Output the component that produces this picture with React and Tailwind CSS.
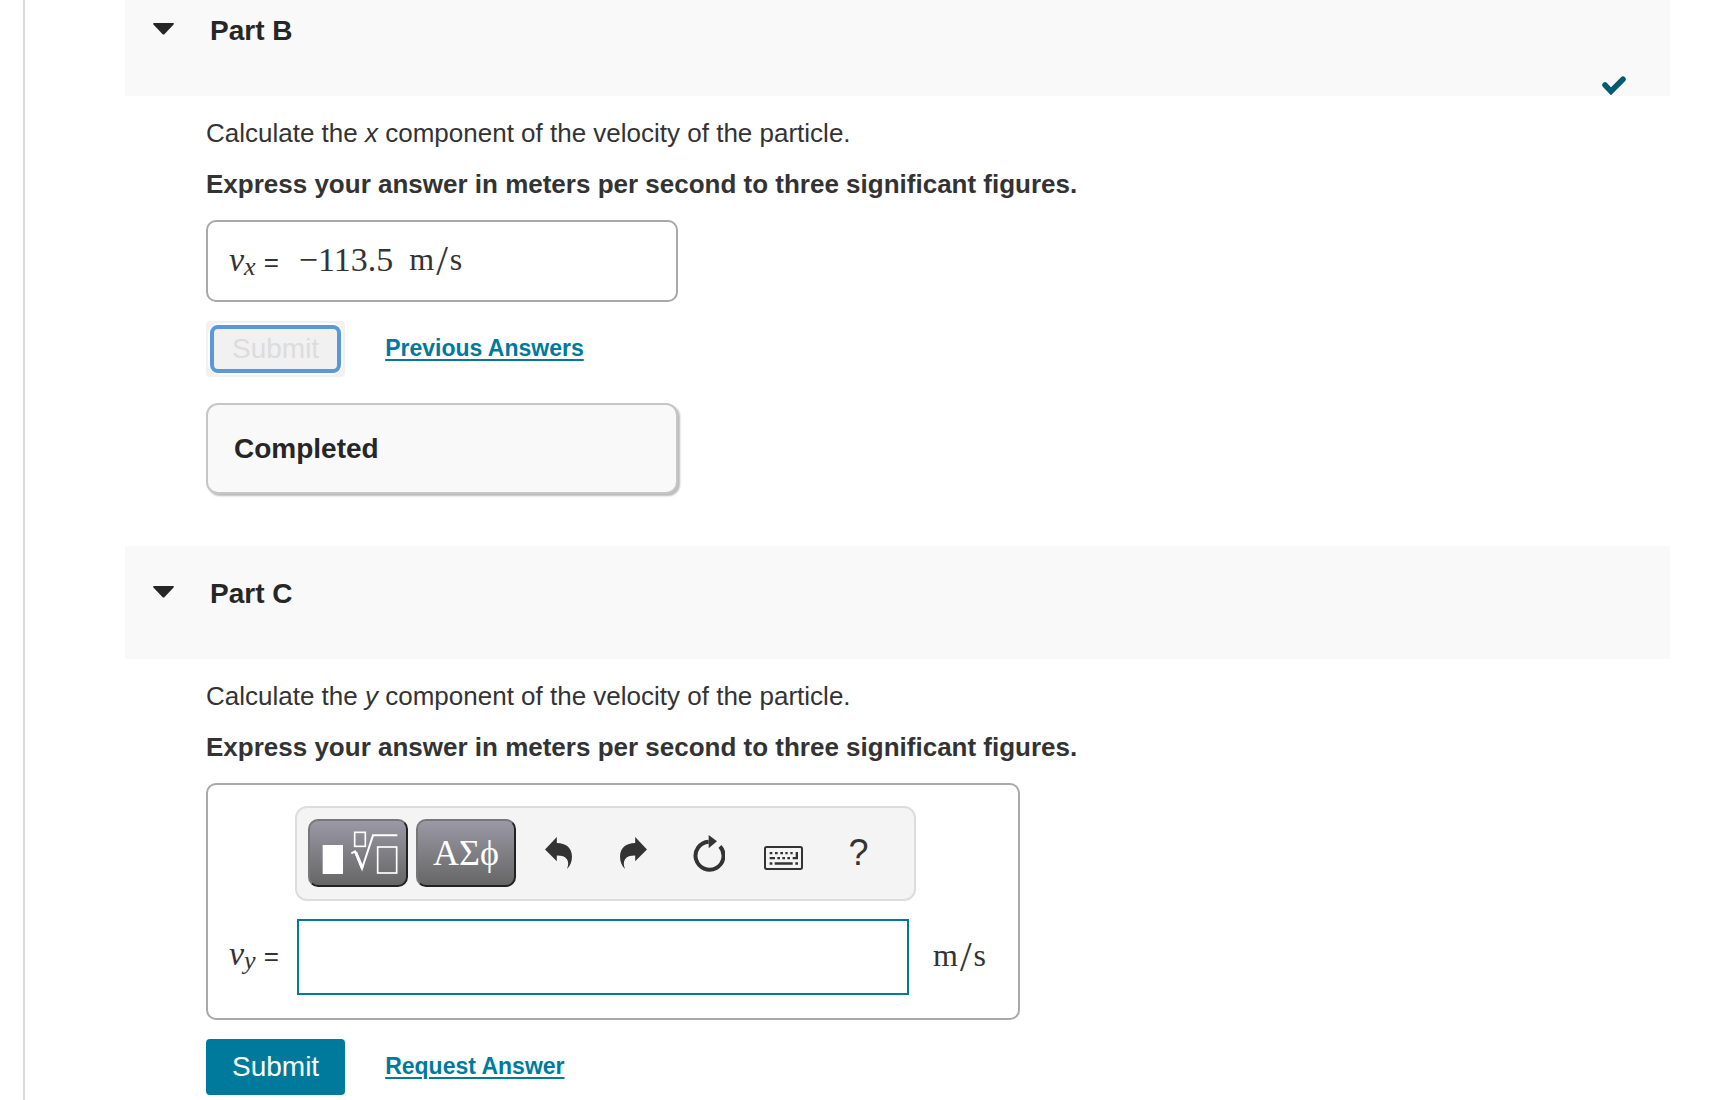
import React, { useState } from "react";

const CaretIcon = () => (
  <svg
    width="21"
    height="12"
    viewBox="0 0 21 12"
    fill="#262626"
    className="mb-1"
    aria-hidden="true"
  >
    <path d="M1 0h19c.9 0 1.200.9.6 1.600l-9 9.400c-.7.7-1.500.7-2.200 0l-9-9.400C-.2.900.1 0 1 0z" />
  </svg>
);

const CheckIcon = () => (
  <svg width="24" height="19" viewBox="0 0 24 19" fill="none" aria-label="Correct">
    <path d="M3 9l6 6.300L21 3.200" stroke="#005a70" strokeWidth="5.500" strokeLinecap="round" />
  </svg>
);

const TemplateIcon = () => (
  <svg width="76" height="44" viewBox="0 0 228 132" fill="none" stroke="#fff" aria-hidden="true">
    <rect x="2" y="42" width="61" height="87" fill="#fff" stroke="none" />
    <rect x="98" y="4" width="32" height="42" strokeWidth="5" />
    <path d="M88 67l11-6 21 52 33-100h73" strokeWidth="6" />
    <path d="M101 63l20 48" strokeWidth="9" />
    <rect x="167" y="48" width="57" height="78" strokeWidth="5" />
  </svg>
);

const UndoIcon = ({ flip }) => (
  <svg
    width="27"
    height="32"
    viewBox="0 0 80 95"
    fill="#333"
    className={flip ? "-scale-x-100" : ""}
    aria-hidden="true"
  >
    <path d="M0 37L35 0v18c27 0 45 15 45 40 0 16-5 28-15 37 5-12 5-21 0-29-5-8-15-11-30-11v17z" />
  </svg>
);

const ResetIcon = () => (
  <svg width="32" height="37" viewBox="0 0 96 111" fill="none" aria-hidden="true">
    <path d="M81 34A42 42 0 1 1 47 20" stroke="#333" strokeWidth="12" />
    <path d="M47 0l25 19-25 21z" fill="#333" />
  </svg>
);

const KeyboardIcon = () => (
  <svg width="39" height="24" viewBox="0 0 117 72" fill="#333" aria-hidden="true">
    <rect x="3" y="3" width="111" height="66" rx="5" fill="none" stroke="#333" strokeWidth="6" />
    <path d="M17 18h8v7h-8zM33 18h8v7h-8zM49 18h8v7h-8zM64 18h7v7h-7zM79 18h7v7h-7z" />
    <path d="M17 33h16v7H17zM40 33h8v7h-8zM55 33h8v7h-8zM70 33h8v7h-8zM86 33h9V18h7v22H86z" />
    <path d="M17 49h8v7h-8zM32 49h54v7H32zM94 49h8v7h-8z" />
  </svg>
);

const Variable = ({ sub }) => (
  <span className="flex items-baseline pb-1">
    <span className="font-['Liberation_Serif',serif] text-[34px] italic">v</span>
    <span className="relative top-1 mr-2 font-['Liberation_Serif',serif] text-[26px] italic">
      {sub}
    </span>
    <span className="text-[26px]">=</span>
  </span>
);

const Unit = () => (
  <span className="flex items-center gap-[2px] pb-1 font-['Liberation_Serif',serif] text-[32px]">
    <span>m</span>
    <span className="pt-1 text-[42px]">/</span>
    <span>s</span>
  </span>
);

const PartHeader = ({ title, done, open, onToggle }) => (
  <header className="flex min-h-[113px] justify-between bg-[#f9f9f9] pr-11 pl-7">
    <h2 className="pt-[26px]">
      <button
        type="button"
        aria-expanded={open}
        onClick={onToggle}
        className="flex items-center gap-9 text-[28px] leading-[44px] font-bold text-[#262626]"
      >
        <CaretIcon />
        {title}
      </button>
    </h2>
    {done && (
      <span className="self-end pb-px">
        <CheckIcon />
      </span>
    )}
  </header>
);

const Question = ({ axis }) => (
  <div className="text-[26px] leading-9">
    <p>
      Calculate the <i>{axis}</i> component of the velocity of the particle.
    </p>
    <p className="mt-[15px] font-bold">
      Express your answer in meters per second to three significant figures.
    </p>
  </div>
);

const ToolButton = ({ label, children }) => (
  <button type="button" aria-label={label} className="flex w-[75px] items-center justify-center">
    {children}
  </button>
);

const paletteButton =
  "flex h-[68px] w-[100px] items-center justify-center rounded-[10px] border-2 border-t-[#777] border-r-[#222] border-b-[#222] border-l-[#777] bg-linear-to-b from-[#9b99a5] to-[#666] text-white";

const linkStyle =
  "pb-[2px] text-[23px] font-bold text-[#007a9c] underline decoration-2 underline-offset-[3px]";

const App = () => {
  const [openB, setOpenB] = useState(true);
  const [openC, setOpenC] = useState(true);
  const [answer, setAnswer] = useState("");

  return (
    <div className="min-h-screen overflow-hidden bg-white pl-[23px] font-['Liberation_Sans',Arial,sans-serif] text-[#333]">
      <main className="-mt-[17px] min-h-[1117px] border-l-2 border-[#d9d9d9] pr-15 pl-25">
        {/* Part B */}
        <section>
          <PartHeader title="Part B" done open={openB} onToggle={() => setOpenB(!openB)} />
          {openB && (
            <div className="pt-[19px] pb-[52px] pl-[81px]">
              <Question axis="x" />
              <div className="mt-[18px] flex h-[82px] w-[472px] max-w-full items-center rounded-[10px] border-2 border-[#a9a9a9] pl-[21px]">
                <Variable sub="x" />
                <span className="ml-5 pb-1 font-['Liberation_Serif',serif] text-[34px]">
                  −113.5
                </span>
                <span className="ml-4">
                  <Unit />
                </span>
              </div>
              <div className="mt-[19px] flex items-center gap-10">
                <button type="button" disabled className="rounded-sm bg-[#f1f1f1] p-[2px]">
                  <span className="block rounded-[10px] bg-white p-[2px]">
                    <span className="block rounded-lg border-4 border-[#5a98dd] bg-[#f1f1f1] px-[18px] text-[28px] leading-10 text-[#dcdcdc]">
                      Submit
                    </span>
                  </span>
                </button>
                <a href="#previous" className={linkStyle}>
                  Previous Answers
                </a>
              </div>
              <div className="mt-[26px] flex h-[91px] w-[472px] max-w-full items-center rounded-[12px] border-2 border-[#c6c6c6] bg-[#f9f9f9] pl-[26px] text-[28px] font-bold text-[#262626] shadow-[2px_2px_2px_#bbb]">
                Completed
              </div>
            </div>
          )}
        </section>

        {/* Part C */}
        <section>
          <PartHeader title="Part C" open={openC} onToggle={() => setOpenC(!openC)} />
          {openC && (
            <div className="pt-[19px] pl-[81px]">
              <Question axis="y" />
              <div className="mt-[18px] w-[814px] max-w-full rounded-[10px] border-2 border-[#a9a9a9] pt-[21px] pb-[23px]">
                {/* Equation toolbar */}
                <div className="ml-[87px] flex w-[621px] rounded-[12px] border-2 border-[#ddd] bg-[#f4f4f4] pt-[11px] pb-3 pl-[11px]">
                  <div className="mr-[5px] flex gap-2">
                    <button type="button" aria-label="Templates" className={`${paletteButton} pl-1`}>
                      <TemplateIcon />
                    </button>
                    <button
                      type="button"
                      className={`${paletteButton} font-['Liberation_Serif',serif] text-4xl`}
                    >
                      ΑΣϕ
                    </button>
                  </div>
                  <ToolButton label="Undo">
                    <UndoIcon />
                  </ToolButton>
                  <ToolButton label="Redo">
                    <UndoIcon flip />
                  </ToolButton>
                  <ToolButton label="Reset">
                    <ResetIcon />
                  </ToolButton>
                  <ToolButton label="Keyboard shortcuts">
                    <span className="pt-[10px]">
                      <KeyboardIcon />
                    </span>
                  </ToolButton>
                  <ToolButton label="Help">
                    <span className="text-4xl">?</span>
                  </ToolButton>
                </div>
                <div className="mt-[18px] flex items-center">
                  <label htmlFor="answer-c" className="w-[89px] pb-1 pl-[21px]">
                    <Variable sub="y" />
                  </label>
                  <input
                    id="answer-c"
                    type="text"
                    value={answer}
                    onChange={(e) => setAnswer(e.target.value)}
                    className="h-[76px] w-[612px] border-2 border-[#007a9c] px-4 text-[28px] outline-none"
                  />
                  <span className="ml-6">
                    <Unit />
                  </span>
                </div>
              </div>
              <div className="mt-[19px] flex items-center gap-10">
                <button
                  type="button"
                  className="rounded-sm bg-[#007a9c] px-[26px] text-[28px] leading-[56px] text-white"
                >
                  Submit
                </button>
                <a href="#request" className={linkStyle}>
                  Request Answer
                </a>
              </div>
            </div>
          )}
        </section>
      </main>
    </div>
  );
};

export default App;
